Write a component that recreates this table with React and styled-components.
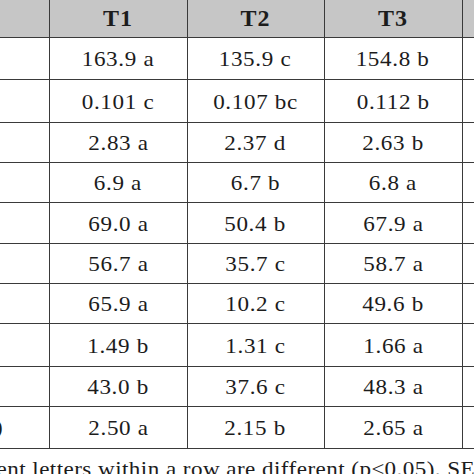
import React from 'react';
import styled, { createGlobalStyle } from 'styled-components';

const GlobalStyle = createGlobalStyle`
  html, body {
    margin: 0;
    padding: 0;
    background: #ffffff;
    overflow: hidden;
  }
  body {
    width: 474px;
    height: 474px;
    font-family: "Liberation Serif", "Times New Roman", serif;
    color: #1c1c1c;
  }
`;

const Page = styled.div`
  width: 474px;
  height: 474px;
  overflow: hidden;
`;

const Table = styled.table`
  border-collapse: collapse;
  table-layout: fixed;
  width: 560px;
`;

const HeadRow = styled.tr`
  height: 37px;
  background-color: #c6c6c6;
  border-bottom: 1.5px solid #3a3a3a;
`;

const HeadCell = styled.th`
  padding: 0;
  font-size: 24px;
  font-weight: bold;
  letter-spacing: 1px;
  text-align: center;
  border-right: 1.5px solid #3a3a3a;
`;

const Row = styled.tr`
  height: ${(p) => p.$h}px;
  border-bottom: 1.5px solid #3a3a3a;
`;

const Cell = styled.td`
  padding: 2px 0 0;
  text-align: center;
  white-space: nowrap;
  border-right: 1.5px solid #3a3a3a;
`;

// the source face is wider than Times, so the glyphs are stretched a little
const Wide = styled.span`
  display: inline-block;
  font-size: 21px;
  letter-spacing: ${(p) => p.$ls || 0.6}px;
  transform: scaleX(1.1);
  transform-origin: ${(p) => p.$origin || 'center'};
  white-space: nowrap;
`;

const LabelCell = styled.td`
  padding: 0;
  overflow: hidden;
  border-right: 1.5px solid #3a3a3a;
`;

const Label = styled.div`
  display: flex;
  justify-content: flex-end;
  padding-right: 45px;
`;

const Note = styled.p`
  margin: 8px 0 0 -57px;
  white-space: nowrap;
`;

const heights = [42.7, 42.7, 40, 40.6, 40.7, 40, 40, 42.7, 40.6, 42];

const rows = [
  ['163.9 a', '135.9 c', '154.8 b'],
  ['0.101 c', '0.107 bc', '0.112 b'],
  ['2.83 a', '2.37 d', '2.63 b'],
  ['6.9 a', '6.7 b', '6.8 a'],
  ['69.0 a', '50.4 b', '67.9 a'],
  ['56.7 a', '35.7 c', '58.7 a'],
  ['65.9 a', '10.2 c', '49.6 b'],
  ['1.49 b', '1.31 c', '1.66 a'],
  ['43.0 b', '37.6 c', '48.3 a'],
  ['2.50 a', '2.15 b', '2.65 a'],
];

const App = () => (
  <Page>
    <GlobalStyle />
    <Table>
      <colgroup>
        <col style={{ width: 49 }} />
        <col style={{ width: 138 }} />
        <col style={{ width: 137 }} />
        <col style={{ width: 138 }} />
        <col />
      </colgroup>
      <thead>
        <HeadRow>
          <HeadCell />
          <HeadCell>T1</HeadCell>
          <HeadCell>T2</HeadCell>
          <HeadCell>T3</HeadCell>
          <HeadCell />
        </HeadRow>
      </thead>
      <tbody>
        {rows.map((vals, i) => (
          <Row key={i} $h={heights[i]}>
            <LabelCell>
              <Label>
                <Wide $origin="right">{i === rows.length - 1 ? '(%)' : ''}</Wide>
              </Label>
            </LabelCell>
            {vals.map((v) => (
              <Cell key={v}>
                <Wide>{v}</Wide>
              </Cell>
            ))}
            <Cell />
          </Row>
        ))}
      </tbody>
    </Table>
    <Note>
      <Wide $ls={0.4} $origin="left">
        different letters within a row are different (p≤0.05). SE
      </Wide>
    </Note>
  </Page>
);

export default App;
